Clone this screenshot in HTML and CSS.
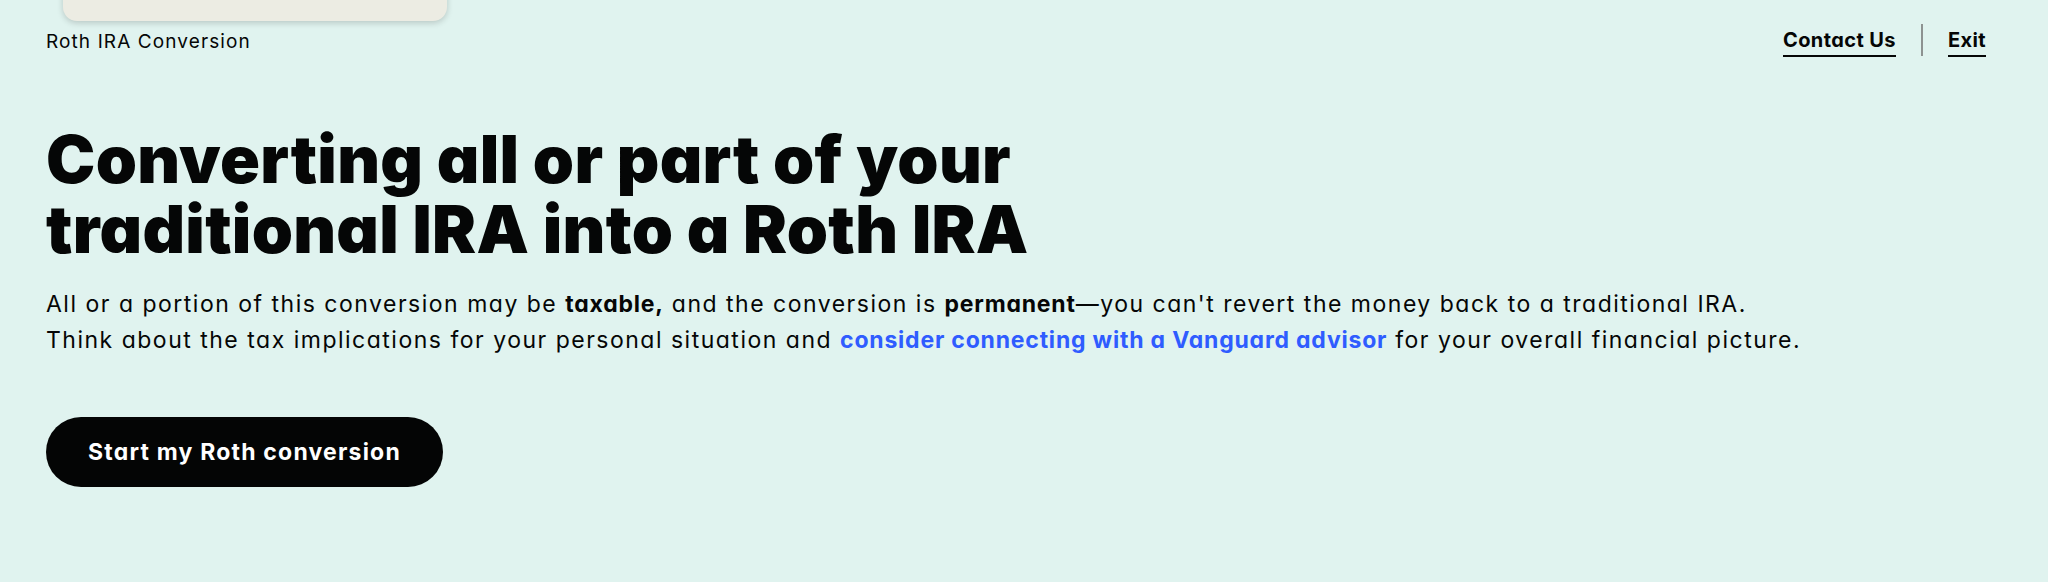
FILE: index.html
```html
<!DOCTYPE html>
<html lang="en">
<head>
<meta charset="utf-8">
<title>Roth IRA Conversion</title>
<link rel="stylesheet" href="styles.css">
</head>
<body>
<div class="popover" aria-hidden="true"><span class="popover-text">Save and finish later (copy)</span></div>
<header class="topbar">
  <div class="page-title">Roth IRA Conversion</div>
  <nav class="topnav">
    <a class="topnav-link" href="#">Contact Us</a>
    <span class="topnav-divider"></span>
    <a class="topnav-link" href="#">Exit</a>
  </nav>
</header>
<main class="intro">
  <h1 class="intro-title">Converting all or part of your<br>traditional IRA into a Roth IRA</h1>
  <p class="intro-text">All or a portion of this conversion may be <strong>taxable,</strong> and the conversion is <strong>permanent</strong>—you can't revert the money back to a traditional IRA.<br>Think about the tax implications for your personal situation and <a class="intro-link" href="#">consider connecting with a Vanguard advisor</a> for your overall financial picture.</p>
  <button class="primary-btn" type="button">Start my Roth conversion</button>
</main>
</body>
</html>
```

FILE: styles.css
```css
* { box-sizing: border-box; }
html, body { margin: 0; padding: 0; }
body {
  background: #e0f3ef;
  color: #050606;
  font-family: "Inter", "Lato", sans-serif;
  font-feature-settings: "cv11" 1;
  height: 582px;
  overflow: hidden;
  position: relative;
}
.popover {
  position: absolute;
  left: 63px;
  top: -40px;
  width: 384px;
  height: 61px;
  background: #ecece3;
  border-radius: 14px;
  box-shadow: 0 2px 6px rgba(0, 0, 0, 0.18);
  overflow: hidden;
}
.popover-text {
  position: absolute;
  left: 60px;
  top: 18px;
  font-size: 19px;
  line-height: 24px;
  color: #8b8b84;
}
.topbar {
  display: flex;
  justify-content: space-between;
  align-items: flex-start;
  padding: 28px 62px 0 46px;
}
.page-title {
  font-size: 19px;
  line-height: 24px;
  padding-top: 2px;
  font-weight: 400;
  letter-spacing: 1.1px;
}
.topnav {
  display: flex;
  align-items: flex-start;
  gap: 25px;
}
.topnav-link {
  color: #050606;
  text-decoration: none;
  font-size: 20px;
  line-height: 24px;
  font-weight: 700;
  letter-spacing: 0.4px;
  padding-bottom: 3px;
  border-bottom: 2px solid #050606;
}
.topnav-divider {
  width: 2px;
  height: 32px;
  margin-top: -4px;
  background: #8d9291;
}
.intro {
  padding: 0 46px;
  margin-top: 67px;
}
.intro-title {
  margin: 0;
  font-size: 66px;
  line-height: 70px;
  font-weight: 900;
  letter-spacing: 0.3px;
}
.intro-text {
  margin: 22px 0 0;
  font-size: 23px;
  line-height: 36px;
  font-weight: 400;
  letter-spacing: 1.5px;
}
.intro-text strong { font-weight: 700; letter-spacing: 0.8px; }
.intro-link {
  color: #2f5cff;
  font-weight: 700;
  letter-spacing: 0.8px;
  text-decoration: none;
}
.primary-btn {
  display: block;
  margin-top: 59px;
  height: 70px;
  width: 397px;
  border: none;
  border-radius: 35px;
  background: #040505;
  color: #ffffff;
  font-family: inherit;
  font-feature-settings: "cv11" 1;
  font-size: 23px;
  font-weight: 700;
  letter-spacing: 1.2px;
  cursor: pointer;
}
```
